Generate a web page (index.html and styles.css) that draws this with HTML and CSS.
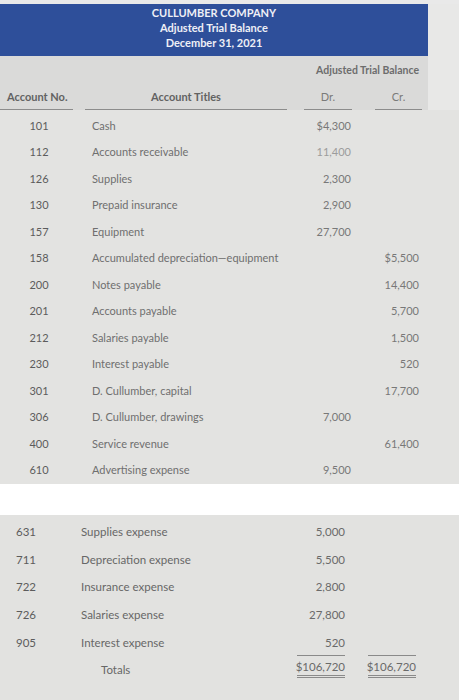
FILE: index.html
```html
<!DOCTYPE html>
<html>
<head>
<meta charset="utf-8">
<link rel="stylesheet" href="styles.css">
</head>
<body>
<div class="page">
  <section class="sheet sheet-top">
    <div class="head">
      <div class="head-main">
        <div class="banner">
          <div>CULLUMBER COMPANY</div>
          <div>Adjusted Trial Balance</div>
          <div>December 31, 2021</div>
        </div>
        <div class="colhead">
          <div class="atb">Adjusted Trial Balance</div>
          <div class="cols">
            <div class="ch ch-no">Account No.</div>
            <div class="ch ch-title">Account Titles</div>
            <div class="ch ch-dr">Dr.</div>
            <div class="ch ch-cr">Cr.</div>
          </div>
        </div>
      </div>
      <div class="head-side"></div>
    </div>
    <div class="rows rows-top">
      <div class="row"><span class="no">101</span><span class="title">Cash</span><span class="dr">$4,300</span><span class="cr"></span></div>
      <div class="row"><span class="no">112</span><span class="title">Accounts receivable</span><span class="dr faint">11,400</span><span class="cr"></span></div>
      <div class="row"><span class="no">126</span><span class="title">Supplies</span><span class="dr">2,300</span><span class="cr"></span></div>
      <div class="row"><span class="no">130</span><span class="title">Prepaid insurance</span><span class="dr">2,900</span><span class="cr"></span></div>
      <div class="row"><span class="no">157</span><span class="title">Equipment</span><span class="dr">27,700</span><span class="cr"></span></div>
      <div class="row"><span class="no">158</span><span class="title">Accumulated depreciation—equipment</span><span class="dr"></span><span class="cr">$5,500</span></div>
      <div class="row"><span class="no">200</span><span class="title">Notes payable</span><span class="dr"></span><span class="cr">14,400</span></div>
      <div class="row"><span class="no">201</span><span class="title">Accounts payable</span><span class="dr"></span><span class="cr">5,700</span></div>
      <div class="row"><span class="no">212</span><span class="title">Salaries payable</span><span class="dr"></span><span class="cr">1,500</span></div>
      <div class="row"><span class="no">230</span><span class="title">Interest payable</span><span class="dr"></span><span class="cr">520</span></div>
      <div class="row"><span class="no">301</span><span class="title">D. Cullumber, capital</span><span class="dr"></span><span class="cr">17,700</span></div>
      <div class="row"><span class="no">306</span><span class="title">D. Cullumber, drawings</span><span class="dr">7,000</span><span class="cr"></span></div>
      <div class="row"><span class="no">400</span><span class="title">Service revenue</span><span class="dr"></span><span class="cr">61,400</span></div>
      <div class="row"><span class="no">610</span><span class="title">Advertising expense</span><span class="dr">9,500</span><span class="cr"></span></div>
    </div>
  </section>

  <div class="gap"></div>

  <section class="sheet sheet-bottom">
    <div class="rows rows-bottom">
      <div class="row"><span class="no">631</span><span class="title">Supplies expense</span><span class="dr">5,000</span><span class="cr"></span></div>
      <div class="row"><span class="no">711</span><span class="title">Depreciation expense</span><span class="dr">5,500</span><span class="cr"></span></div>
      <div class="row"><span class="no">722</span><span class="title">Insurance expense</span><span class="dr">2,800</span><span class="cr"></span></div>
      <div class="row"><span class="no">726</span><span class="title">Salaries expense</span><span class="dr">27,800</span><span class="cr"></span></div>
      <div class="row"><span class="no">905</span><span class="title">Interest expense</span><span class="dr rule">520</span><span class="cr rule"></span></div>
      <div class="row total"><span class="no"></span><span class="title">Totals</span><span class="dr dbl">$106,720</span><span class="cr dbl">$106,720</span></div>
    </div>
  </section>
</div>
</body>
</html>
```

FILE: styles.css
```css
* { box-sizing: border-box; }
html, body { margin: 0; padding: 0; background: #ffffff; }
body {
  font-family: Lato, "Open Sans", "Liberation Sans", sans-serif;
  width: 459px;
  height: 700px;
  overflow: hidden;
}
.page { display: flex; flex-direction: column; height: 700px; }

.sheet-top {
  background: #e3e3e1;
  padding-top: 4px;
  background-image: linear-gradient(#e9e9e9, #e9e9e9);
  background-size: 100% 4px;
  background-repeat: no-repeat;
}

.head { display: flex; }
.head-main { width: 428px; }
.head-side { flex: 1; background: #e8e8e7; }

.banner {
  background: #2e4f9a;
  height: 52px;
  color: #eef0f6;
  font-weight: 700;
  font-size: 11px;
  line-height: 15px;
  text-align: center;
  padding-top: 1px;
}

.colhead {
  background: #dadad9;
  height: 54px;
  display: flex;
  flex-direction: column;
}
.atb {
  font-weight: 700;
  font-size: 10.5px;
  color: #6d6d6d;
  text-align: right;
  padding-right: 9px;
  padding-top: 8px;
  height: 26px;
}
.cols {
  display: grid;
  grid-template-columns: 73px 214px 65px 70px;
  height: 28px;
}
.ch {
  font-weight: 700;
  font-size: 11px;
  color: #626262;
  border-bottom: 1px solid #8c8c8c;
  display: flex;
  align-items: center;
  padding-top: 2px;
}
.ch-no { padding-left: 7px; }
.ch-title { margin-left: 12px; justify-content: center; }
.ch-dr { margin-left: 17px; justify-content: center; color: #7a7a7a; font-weight: 400; }
.ch-cr { margin-left: 23px; justify-content: center; color: #7a7a7a; font-weight: 400; }

.rows { display: flex; flex-direction: column; }
.row {
  display: grid;
  align-items: center;
  font-size: 11px;
  color: #6a6a6a;
}
.row .no { text-align: center; color: #5c5c5c; }
.row .dr, .row .cr { text-align: right; color: #787878; }
.row .dr.faint { color: #9c9c9c; }

.rows-top { padding: 2px 0 1px; }
.rows-top .row {
  grid-template-columns: 78px 222px 51px 68px;
  height: 26.5px;
}
.rows-top .title { padding-left: 14px; color: #6f6f6f; }

.gap { height: 31px; background: #ffffff; }

.sheet-bottom {
  background: #e2e2e0;
  flex: 1;
  padding-top: 3px;
}
.rows-bottom .row {
  grid-template-columns: 52px 245px 48px 23px 48px;
  height: 27.6px;
  font-size: 11.5px;
}
.rows-bottom .cr { grid-column: 5; }
.rows-bottom .title { padding-left: 29px; color: #676767; }
.rows-bottom .dr, .rows-bottom .cr { color: #6a6a6a; }
.rows-bottom .total .title { padding-left: 49px; }
.rule {
  align-self: stretch;
  display: flex;
  align-items: center;
  justify-content: flex-end;
  border-bottom: 1px solid #8a8a8a;
  padding-top: 2px;
}
.dbl {
  align-self: stretch;
  display: flex;
  align-items: center;
  justify-content: flex-end;
  border-bottom: 3px double #8a8a8a;
  height: 22px;
  padding-top: 3px;
}
```
